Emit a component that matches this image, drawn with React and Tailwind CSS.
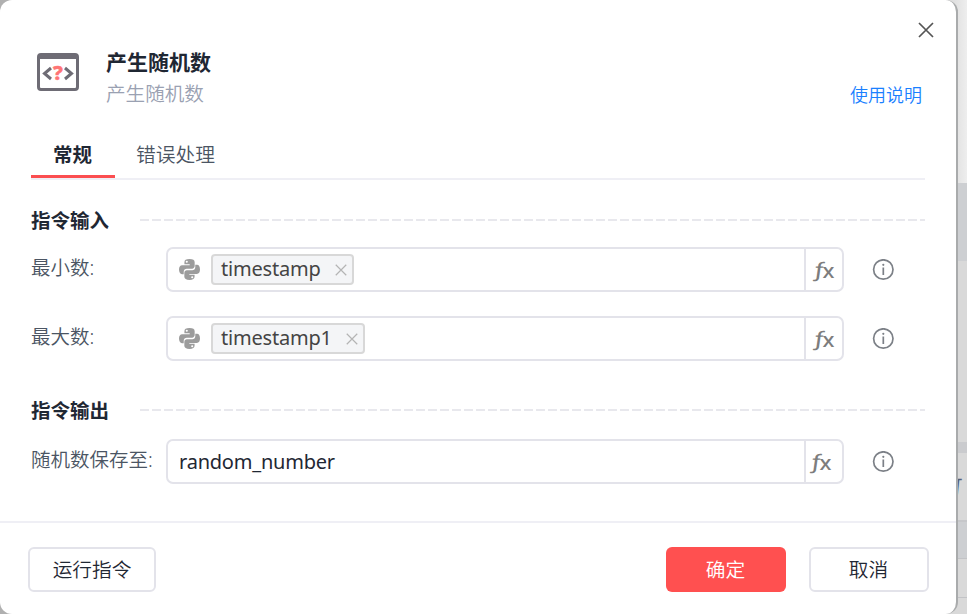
import React from "react";

const FONT = "font-['Noto_Sans','Noto_Sans_CJK_SC',sans-serif]";

function Divider() {
  return (
    <svg className="mb-[3px] ml-auto h-[2px] w-[785px]" viewBox="0 0 785 2">
      <line x1="0" y1="1" x2="785" y2="1" stroke="#e8e8ed" strokeWidth="2" strokeDasharray="9 3" />
    </svg>
  );
}

function Python() {
  return (
    <svg className="h-[21px] w-[21px] shrink-0" viewBox="0 0 24 24" fill="#9c9c9c">
      <path d="M12 0C8 0 6.200 1.300 6.200 3.600V6h6v1H3.600C1.300 7 0 9 0 12s1.300 5.300 3.400 5.300h2V14.500c0-2 1.500-3.400 3.500-3.400h6c1.700 0 3-1.300 3-3V3.600C17.900 1.300 16 0 12 0ZM8.900 1.900a1.200 1.200 0 1 1 0 2.400 1.200 1.200 0 0 1 0-2.400Z" />
      <path d="M12 24c4 0 5.800-1.300 5.800-3.600V18h-6v-1h8.600c2.300 0 3.600-2 3.600-5s-1.300-5.300-3.400-5.300h-2V9.500c0 2-1.500 3.400-3.500 3.400h-6c-1.700 0-3 1.300-3 3v4.500C6.100 22.700 8 24 12 24Zm3.100-1.900a1.200 1.200 0 1 1 0-2.400 1.200 1.200 0 0 1 0 2.400Z" />
    </svg>
  );
}

function Cross({ className, width }) {
  return (
    <svg className={className} viewBox="0 0 16 16" fill="none" stroke="currentColor" strokeWidth={width}>
      <path d="M1 1l14 14M15 1L1 15" />
    </svg>
  );
}

function Tag({ children }) {
  return (
    <span className="ml-[11px] flex h-[31px] items-center rounded-[4px] border-2 border-[#d8d8d8] bg-[#f4f5f7] pr-[5px] pl-2 text-[#444]">
      <span className="mb-[2px] text-[20px] leading-[26px] tracking-[-0.2px]">{children}</span>
      <Cross className="ml-[14px] h-[12px] w-[12px] text-[#b4b4b4]" width="1.6" />
    </span>
  );
}

function Field({ label, children, shift = "pl-[10px]" }) {
  return (
    <div className="flex h-[45px] items-center">
      <span className="mb-[4px] w-[135px] shrink-0 text-[19.500px] font-[350] whitespace-nowrap text-[#4b5563]">{label}</span>
      <div className="flex h-[45px] w-[678px] rounded-[7px] border-2 border-[#e3e3ea]">
        <div className="flex flex-1 items-center pl-[11px]">{children}</div>
        <div className={`flex w-[38px] items-center border-l-2 border-[#e3e3ea] text-[#7d7d7d] ${shift}`}>
          <span className="scale-x-135 -skew-x-6 font-['Roboto'] text-[20px] leading-[24px]">ƒ</span>
          <span className="mt-[2px] scale-x-110 text-[20px] leading-[24px] font-medium">x</span>
        </div>
      </div>
      <svg className="ml-[28px] h-[22px] w-[22px]" viewBox="0 0 22 22" fill="none" stroke="#7c8087" strokeWidth="1.7">
        <circle cx="11.300" cy="10.500" r="9.700" />
        <path d="M11.300 8.500v7.500" />
        <circle cx="11.300" cy="5.800" r="1.100" fill="#7c8087" stroke="none" />
      </svg>
    </div>
  );
}

function Backdrop() {
  return (
    <div className="absolute inset-y-0 right-0 flex w-[20px] flex-col">
      <div className="h-[183px] bg-linear-to-r from-[#d8d8d8] to-[#eeeeee]" />
      <div className="h-[78px] bg-[#cdcfd2]" />
      <div className="h-[181px] bg-[#d9d9d9]" />
      <div className="h-[11px] bg-[#cacbce]" />
      <div className="flex h-[67px] items-center justify-end bg-[#d9d9d9] pr-[5px] text-[20px] text-[#566179]"><span className="-skew-x-6">可</span></div>
      <div className="h-[38px] border-t-2 border-[#c6c7ca] bg-[#cdcfd2]" />
      <div className="h-[40px] border-y border-[#c2c3c6] bg-[#d9d9d9]" />
      <div className="flex-1 bg-[#d9d9d9]" />
    </div>
  );
}

export default function App() {
  return (
    <div className={`relative h-[614px] w-[967px] overflow-hidden bg-[#b0b0b0] ${FONT}`}>
      <Backdrop />
      <div className="relative flex h-[614px] w-[958px] flex-col rounded-[12px] border-r-2 border-[#a9abac] bg-white text-[#1f2733]">
        <header className="flex h-[131px] pl-[37px]">
          <svg className="mt-[53px] h-[38px] w-[42px]" viewBox="0 0 42 38">
            <rect x="1.500" y="1.500" width="39" height="35" rx="2.500" fill="none" stroke="#6e6c75" strokeWidth="3" />
            <path d="M2 4h38" stroke="#6e6c75" strokeWidth="4" />
            <path d="M14 15l-6.500 5.500 6.500 5.500M28 15l6.500 5.500-6.500 5.500" fill="none" stroke="#6e6c75" strokeWidth="3" />
            <text x="21" y="27" textAnchor="middle" fontSize="20" fontWeight="800" fill="#ff7575" stroke="#ff7575" strokeWidth="0.5">?</text>
          </svg>
          <div className="mt-[47px] ml-[27px]">
            <h1 className="text-[21px] leading-[31px] font-bold">产生随机数</h1>
            <p className="text-[19.600px] leading-[32px] font-[350] text-[#9aa1b2]">产生随机数</p>
          </div>
          <div className="mr-[22px] ml-auto flex flex-col items-end">
            <Cross className="mt-[22px] h-[16px] w-[16px] text-[#555]" width="1.7" />
            <a className="mt-[43px] mr-[12px] text-[18px] leading-[28px] font-[350] text-[#1a80ff]">使用说明</a>
          </div>
        </header>
        <nav className="mr-[31px] ml-[31px] flex h-[49px] border-b-2 border-[#efeff5] text-[19.500px] leading-[48px]">
          <span className="h-[47px] w-[84px] border-b-3 border-[#fb4e50] pr-px text-center font-bold">常规</span>
          <span className="ml-[21px] text-[19.800px] font-[350] text-[#4b5563]">错误处理</span>
        </nav>
        <main className="flex h-[341px] flex-col pr-[31px] pl-[31px]">
          <div className="mt-[25px] flex h-[32px] items-center text-[19.500px] font-bold">指令输入<Divider /></div>
          <div className="mt-[10px]"><Field label="最小数:"><Python /><Tag>timestamp</Tag></Field></div>
          <div className="mt-[24px]"><Field label="最大数:"><Python /><Tag>timestamp1</Tag></Field></div>
          <div className="mt-[34px] flex h-[32px] items-center text-[19.500px] font-bold">指令输出<Divider /></div>
          <div className="mt-[12px]">
            <Field label="随机数保存至:" shift="pl-[7px]"><span className="text-[20px] tracking-[-0.22px]">random_number</span></Field>
          </div>
        </main>
        <footer className="flex flex-1 border-t-2 border-[#efeff5] pt-[24px] pr-[27px] pl-[28px] text-[19.700px] font-[350]">
          <button className="h-[45px] w-[128px] rounded-[6px] border-2 border-[#e3e3ea]">运行指令</button>
          <button className="ml-auto h-[45px] w-[120px] rounded-[6px] bg-[#ff5050] pr-px text-white">确定</button>
          <button className="ml-[23px] h-[45px] w-[120px] rounded-[6px] border-2 border-[#e3e3ea] pr-px">取消</button>
        </footer>
      </div>
    </div>
  );
}
